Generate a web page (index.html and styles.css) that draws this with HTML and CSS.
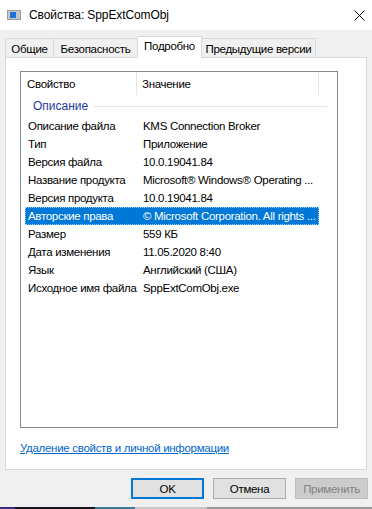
FILE: index.html
```html
<!DOCTYPE html>
<html>
<head>
<meta charset="utf-8">
<link rel="stylesheet" href="styles.css">
</head>
<body>
<div class="window">
  <div class="titlebar">
    <span class="appicon"><span class="appicon-dot"></span></span>
    <span class="title">Свойства: SppExtComObj</span>
    <svg class="close" width="11" height="11" viewBox="0 0 11 11"><path d="M0.5 0.5L10.5 10.5M10.5 0.5L0.5 10.5" stroke="#000" stroke-width="1"/></svg>
  </div>
  <div class="tabs">
    <div class="tab t1">Общие</div>
    <div class="tab t2">Безопасность</div>
    <div class="tab active t3">Подробно</div>
    <div class="tab t4">Предыдущие версии</div>
  </div>
  <div class="panel">
    <div class="listbox">
      <div class="header">
        <div class="hcol hc1">Свойство</div>
        <div class="hcol hc2">Значение</div>
        <div class="hcol hc3"></div>
      </div>
      <div class="group"><span class="gname">Описание</span><span class="gline"></span></div>
      <div class="row"><span class="c1">Описание файла</span><span class="c2">KMS Connection Broker</span></div>
      <div class="row"><span class="c1">Тип</span><span class="c2">Приложение</span></div>
      <div class="row"><span class="c1">Версия файла</span><span class="c2">10.0.19041.84</span></div>
      <div class="row"><span class="c1">Название продукта</span><span class="c2">Microsoft® Windows® Operating ...</span></div>
      <div class="row"><span class="c1">Версия продукта</span><span class="c2">10.0.19041.84</span></div>
      <div class="row selected"><span class="c1">Авторские права</span><span class="c2">© Microsoft Corporation. All rights ...</span></div>
      <div class="row"><span class="c1">Размер</span><span class="c2">559 КБ</span></div>
      <div class="row"><span class="c1">Дата изменения</span><span class="c2">11.05.2020 8:40</span></div>
      <div class="row"><span class="c1">Язык</span><span class="c2">Английский (США)</span></div>
      <div class="row"><span class="c1">Исходное имя файла</span><span class="c2">SppExtComObj.exe</span></div>
    </div>
    <a class="link">Удаление свойств и личной информации</a>
  </div>
  <div class="buttons">
    <div class="btn default">OK</div>
    <div class="btn">Отмена</div>
    <div class="btn disabled">Применить</div>
  </div>
  <div class="taskbar">
    <span class="tb tb1"></span><span class="tb tb2"></span><span class="tb tb3"></span><span class="tb tb4"></span><span class="tb tb5"></span>
  </div>
</div>
</body>
</html>
```
FILE: styles.css
```css
* { box-sizing: border-box; }
html, body { margin: 0; padding: 0; }
body {
  width: 372px;
  height: 509px;
  overflow: hidden;
  background: #f0f0f0;
  font-family: "Liberation Sans", Arial, sans-serif;
  font-size: 11.5px;
  letter-spacing: -0.3px;
  color: #000;
}
.window { width: 372px; height: 509px; display: flex; flex-direction: column; }
.titlebar {
  height: 30px;
  background: #fff;
  display: flex;
  align-items: center;
  padding-left: 7px;
}
.appicon {
  width: 14px;
  height: 10px;
  background: #c8c8c8;
  border: 1px solid #9a9a9a;
  display: flex;
  align-items: center;
  padding-left: 2px;
  margin-top: -1px;
}
.appicon-dot { width: 6px; height: 6px; background: #1a73d9; }
.title { margin-left: 8px; font-size: 12px; letter-spacing: -0.1px; color: #000; }
.close { margin-left: auto; margin-right: 7px; margin-top: 1px; }
.tabs {
  display: flex;
  align-items: flex-end;
  height: 27px;
  padding-left: 5px;
}
.tab {
  height: 19px;
  border: 1px solid #d9d9d9;
  border-bottom: none;
  background: #f0f0f0;
  display: flex;
  align-items: center;
  justify-content: center;
  margin-right: -1px;
  position: relative;
  white-space: nowrap;
  padding-top: 1px;
}
.t1 { width: 49px; }
.t2 { width: 85px; }
.t3 { width: 65px; }
.t4 { width: 115px; }
.tab.active {
  height: 22px;
  background: #fff;
  margin-bottom: -1px;
  z-index: 2;
  padding-bottom: 3px;
  padding-top: 0;
}
.panel {
  width: 362px;
  height: 413px;
  margin-left: 5px;
  background: #fff;
  border: 1px solid #d9d9d9;
  padding: 13px 0 0 14px;
  display: flex;
  flex-direction: column;
}
.listbox {
  width: 318px;
  height: 357px;
  border: 1px solid #828790;
}
.header { display: flex; height: 23px; }
.hcol { display: flex; align-items: center; height: 23px; border-right: 1px solid #e5e5e5; }
.hc1 { width: 116px; padding-left: 6px; }
.hc2 { width: 182px; padding-left: 5px; }
.hc3 { border-right: none; }
.group { height: 22px; display: flex; align-items: center; padding-left: 12px; padding-bottom: 1px; }
.gname { color: #1e3a9c; font-size: 12px; letter-spacing: 0; }
.gline { height: 1px; background: #dde5ee; width: 233px; margin-left: 6px; margin-top: 1px; }
.row {
  height: 18px;
  display: flex;
  align-items: center;
  margin-left: 4px;
  width: 294px;
  white-space: nowrap;
}
.c1 { width: 118px; padding-left: 3px; }
.c2 { }
.row.selected {
  background: #0078d7;
  color: #fff;
  outline: 1px dotted #99c9ef;
  outline-offset: -1px;
}
.link {
  margin-top: 12px;
  margin-left: -14px;
  padding-left: 14px;
  color: #0066cc;
  text-decoration: underline;
  height: 16px;
  line-height: 16px;
}
.buttons {
  display: flex;
  justify-content: flex-end;
  gap: 9px;
  padding-right: 4px;
  margin-top: 8px;
}
.btn {
  width: 73px;
  height: 21px;
  border: 1px solid #adadad;
  background: #e1e1e1;
  display: flex;
  align-items: center;
  justify-content: center;
}
.btn.default { border: 2px solid #0078d7; }
.btn.disabled { border-color: #bfbfbf; background: #cccccc; color: #838383; }
.taskbar { display: flex; margin-top: auto; height: 2px; }
.tb { height: 2px; }
.tb1 { width: 15px; background: #3b2a8a; }
.tb2 { width: 80px; background: #15151f; }
.tb3 { width: 40px; background: #3f7896; }
.tb4 { width: 72px; background: #c8c8c8; }
.tb5 { flex: 1; background: #9a9a9a; }
```
